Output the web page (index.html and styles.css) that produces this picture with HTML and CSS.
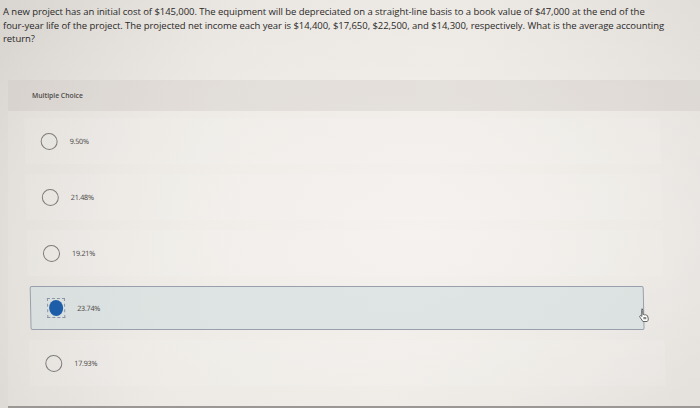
FILE: index.html
```
<!DOCTYPE html>
<html>
<head>
<meta charset="utf-8">
<link rel="stylesheet" href="styles.css">
</head>
<body>
<div class="page">
  <p class="question">A new project has an initial cost of $145,000. The equipment will be depreciated on a straight-line basis to a book value of $47,000 at the end of the four-&#8288;year life of the project. The projected net income each year is $14,400, $17,650, $22,500, and $14,300, respectively. What is the average accounting return?</p>
  <div class="panel">
    <div class="panel-head">Multiple Choice</div>
    <div class="options">
      <div class="option"><span class="radio"></span><span class="label">9.50%</span></div>
      <div class="option"><span class="radio"></span><span class="label">21.48%</span></div>
      <div class="option"><span class="radio"></span><span class="label">19.21%</span></div>
      <div class="option selected"><span class="focus"><span class="radio filled"></span></span><span class="label">23.74%</span>
        <svg class="cursor" width="12" height="14" viewBox="0 0 12 14"><path d="M3.5 1.2c.7 0 1.1.5 1.1 1.1v4.2l.3-.1c.6-.2 1.2 0 1.4.5.5-.3 1.2-.2 1.5.3.5-.2 1.2 0 1.4.6l.6 2.3c.3 1.3-.1 2.6-1 3.4H4.5L1.6 9.1c-.4-.6-.2-1.2.3-1.5.5-.3 1 0 1.3.4l.3.4V2.3c0-.6.4-1.1 1-1.1z" fill="#fff" stroke="#555" stroke-width="0.9"/><rect x="5" y="9" width="3" height="2.3" fill="#888"/></svg>
      </div>
      <div class="option"><span class="radio"></span><span class="label">17.93%</span></div>
    </div>
  </div>
</div>
</body>
</html>
```
FILE: styles.css
```
html, body {
  margin: 0;
  padding: 0;
}
body {
  width: 700px;
  height: 408px;
  overflow: hidden;
  font-family: "Open Sans", "Liberation Sans", sans-serif;
  background:
    radial-gradient(ellipse 520px 300px at 420px 230px, #f4f0ec 0%, rgba(244,240,236,0) 100%),
    linear-gradient(100deg, #d9d5d0 0%, #e8e4df 30%, #ebe7e2 60%, #dcd8d3 100%);
}
.page {
  height: 408px;
  display: flex;
  flex-direction: column;
}
.question {
  margin: 0;
  padding: 5px 18px 0 3px;
  font-size: 9.5px;
  line-height: 13.5px;
  color: #2a2928;
  letter-spacing: -0.05px;
}
.panel {
  margin: 34px 0 0 8px;
  flex: 1;
  border-bottom: 2px solid #9a9794;
  background: rgba(255,255,255,0.1);
}
.panel-head {
  height: 31px;
  display: flex;
  align-items: center;
  padding-left: 24px;
  font-size: 6.8px;
  font-weight: 600;
  color: #4d4b49;
  background: rgba(190,185,180,0.25);
}
.options {
  padding: 7px 40px 0 16px;
  display: flex;
  flex-direction: column;
  gap: 10px;
  transform: skewX(1.2deg);
  transform-origin: top left;
}
.option {
  position: relative;
  height: 46px;
  display: flex;
  align-items: center;
  padding-left: 16px;
  background: rgba(255,255,255,0.1);
}
.option.selected {
  height: 42px;
  margin: 0 20px 0 2px;
  padding-left: 16px;
  background: rgba(205,220,222,0.55);
  border: 1.5px solid #98a0ab;
  border-radius: 2px;
}
.radio {
  width: 15px;
  height: 15px;
  border: 1.3px solid #7d7b79;
  border-radius: 50%;
  flex: none;
}
.radio.filled {
  width: 14px;
  height: 16px;
  border: none;
  background: #1e5ea8;
}
.focus {
  display: flex;
  padding: 1px;
  border: 1px dashed #8a95a5;
}
.label {
  margin-left: 12px;
  font-size: 7.3px;
  color: #4a4846;
  letter-spacing: -0.3px;
}
.cursor {
  position: absolute;
  right: -7px;
  top: 21px;
}
```
